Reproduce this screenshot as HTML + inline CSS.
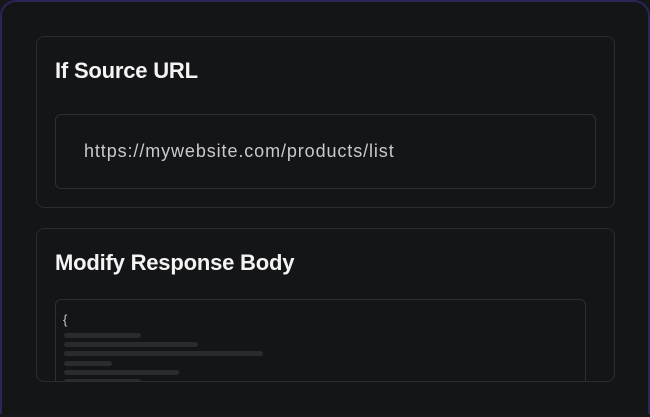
<!DOCTYPE html>
<html><head><style>
html,body{margin:0;padding:0;width:650px;height:417px;overflow:hidden;background:#16171a;font-family:"Liberation Sans",sans-serif}
.frame{position:absolute;left:0;top:0;width:650px;height:414px;box-sizing:border-box;border:2px solid #2d2458;border-bottom:none;border-radius:16px 16px 0 0;background:#141517;overflow:hidden}
.card{position:absolute;border:1px solid #2b2c30;border-radius:8px;box-sizing:border-box;overflow:hidden}
.t{position:absolute;left:18px;color:#f4f4f5;font-size:22px;font-weight:bold;letter-spacing:-0.2px}
.inp{position:absolute;left:18px;border:1px solid #2e2f33;border-radius:6px;box-sizing:border-box}
.l{position:absolute;left:8px;height:5px;border-radius:3px;background:#2a2b2f}
</style></head><body>
<div class="frame">
<div class="card" style="left:34px;top:34px;width:579px;height:172px">
 <div class="t" style="top:21px">If Source URL</div>
 <div class="inp" style="top:77px;width:541px;height:75px">
  <div style="position:absolute;left:28px;top:26px;color:#c9c9cc;font-size:18px;letter-spacing:0.9px">https://mywebsite.com/products/list</div>
 </div>
</div>
<div class="card" style="left:34px;top:226px;width:579px;height:154px">
 <div class="t" style="top:21px">Modify Response Body</div>
 <div class="inp" style="top:70px;width:531px;height:100px">
  <div style="position:absolute;left:7px;top:12px;color:#c9c9cc;font-size:13px">{</div>
  <div class="l" style="top:33px;width:77px"></div>
  <div class="l" style="top:42px;width:134px"></div>
  <div class="l" style="top:51px;width:199px"></div>
  <div class="l" style="top:61px;width:48px"></div>
  <div class="l" style="top:70px;width:115px"></div>
  <div class="l" style="top:79px;width:77px"></div>
 </div>
</div>
</div>
</body></html>
